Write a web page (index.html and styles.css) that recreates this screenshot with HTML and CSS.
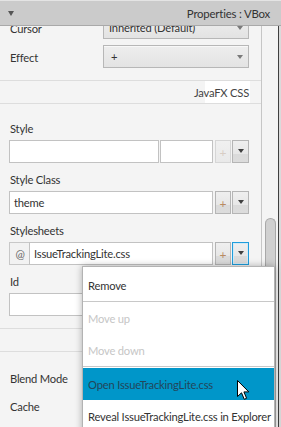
FILE: index.html
```html
<!DOCTYPE html>
<html>
<head>
<meta charset="utf-8">
<link rel="stylesheet" href="styles.css">
</head>
<body>
<div class="panel">
  <div class="header">
    <span class="hdr-tri"></span>
    <span class="hdr-title">Properties : VBox</span>
  </div>
  <div class="body">
    <div class="viewport">
      <div class="content">
        <div class="row">
          <span class="lbl">Cursor</span>
          <div class="combo"><span>Inherited (Default)</span><span class="combo-arrow"></span></div>
        </div>
        <div class="row">
          <span class="lbl">Effect</span>
          <div class="combo"><span class="combo-plus">+</span><span class="combo-arrow"></span></div>
        </div>
        <div class="sep sep-first"></div>
        <div class="band band-css"><span class="band-title">JavaFX CSS</span></div>
        <div class="sep"></div>

        <div class="grp grp-first">
          <div class="glbl">Style</div>
          <div class="fields">
            <div class="field f-style1"></div>
            <div class="field f-style2"></div>
            <div class="btn btn-plus disabled">+</div>
            <div class="btn btn-drop"><span class="drop-tri"></span></div>
          </div>
        </div>
        <div class="grp">
          <div class="glbl">Style Class</div>
          <div class="fields">
            <div class="field f-wide">theme</div>
            <div class="btn btn-plus">+</div>
            <div class="btn btn-drop"><span class="drop-tri"></span></div>
          </div>
        </div>
        <div class="grp">
          <div class="glbl">Stylesheets</div>
          <div class="fields">
            <div class="at">@</div>
            <div class="field f-sheet">IssueTrackingLite.css</div>
            <div class="btn btn-plus">+</div>
            <div class="btn btn-drop focused"><span class="drop-tri"></span></div>
          </div>
        </div>
        <div class="grp">
          <div class="glbl">Id</div>
          <div class="fields">
            <div class="field f-id"></div>
          </div>
        </div>
        <div class="sep sep-id"></div>
        <div class="band"></div>
        <div class="sep"></div>
        <div class="row row-blend">
          <span class="lbl">Blend Mode</span>
        </div>
        <div class="row row-cache">
          <span class="lbl">Cache</span>
        </div>
      </div>
    </div>
    <div class="scroll"><div class="thumb"></div></div>
    <div class="edge-dark"></div>
    <div class="edge-light"></div>
  </div>

  <div class="menu">
    <div class="mi">Remove</div>
    <div class="msep"></div>
    <div class="mi dis">Move up</div>
    <div class="mi dis">Move down</div>
    <div class="msep msep-gap"></div>
    <div class="mi hl">Open IssueTrackingLite.css</div>
    <div class="mi">Reveal IssueTrackingLite.css in Explorer</div>
  </div>

  <svg class="pointer" width="14" height="22" viewBox="0 0 14 22">
    <path d="M0.5 0.5 L0.5 16.5 L4.5 12.8 L7.3 19.3 L9.6 18.3 L6.9 11.9 L11.8 11.9 Z" fill="#ffffff" stroke="#000000" stroke-width="1" stroke-linejoin="miter"/>
  </svg>
</div>
</body>
</html>
```

FILE: styles.css
```css
* { box-sizing: border-box; }
html, body { margin: 0; padding: 0; }
body {
  width: 281px;
  height: 427px;
  overflow: hidden;
  background: #f4f4f4;
  font-family: Lato, "Open Sans", sans-serif;
  font-size: 11.2px;
  letter-spacing: -0.2px;
  color: #333333;
}
.panel {
  position: relative;
  width: 281px;
  height: 427px;
  overflow: hidden;
}
.header {
  height: 26px;
  background: #cbcbcb;
  border-top: 1px solid #e4e4e4;
  border-bottom: 1px solid #a9a9a9;
  display: flex;
  align-items: center;
  justify-content: space-between;
  padding: 0 11px 0 8px;
}
.hdr-tri {
  width: 0;
  height: 0;
  border-left: 3px solid transparent;
  border-right: 3px solid transparent;
  border-top: 5px solid #555555;
  margin-top: 1px;
}
.hdr-title { color: #333333; font-size: 11.4px; }

.body {
  display: flex;
  height: 401px;
}
.viewport {
  width: 262px;
  border-right: 1px solid #c6c6c6;
  overflow: hidden;
}
.content { margin-top: -10px; }

.row {
  display: flex;
  align-items: center;
  height: 23px;
  padding-left: 10px;
}
.row + .row { margin-top: 6px; }
.lbl { width: 93px; padding-top: 1px; }
.combo {
  width: 146px;
  height: 23px;
  border: 1px solid #b7b7b7;
  background: linear-gradient(#eeeeee, #e3e3e3);
  box-shadow: inset 0 1px 0 #f8f8f8;
  display: flex;
  align-items: center;
  justify-content: space-between;
  padding: 0 5px 0 5px;
}
.combo-plus { padding-left: 2px; }
.combo-arrow {
  width: 0;
  height: 0;
  border-left: 3.5px solid transparent;
  border-right: 3.5px solid transparent;
  border-top: 4px solid #7a7a7a;
}

.sep { height: 1px; background: #dddddd; }
.sep-first { margin-top: 12px; }
.band { height: 22px; }
.band-css {
  display: flex;
  align-items: center;
  justify-content: flex-end;
  padding-right: 12px;
  background: linear-gradient(90deg, #f4f4f4 0, #f4f4f4 205px, #ffffff 205px, #ffffff 250px, #f4f4f4 250px);
}
.band-title { color: #444444; }

.grp { padding-left: 9px; margin-top: 8px; }
.grp-first { margin-top: 16px; }
.glbl { height: 17px; line-height: 17px; padding-left: 1px; margin-bottom: 3px; }
.fields { display: flex; height: 23px; }
.field {
  height: 23px;
  border: 1px solid #c2c2c2;
  background: #ffffff;
  display: flex;
  align-items: center;
  padding: 0 4px;
}
.f-style1 { width: 150px; margin-right: 1px; }
.f-style2 { width: 53px; margin-right: 2px; }
.f-wide { width: 204px; margin-right: 2px; }
.f-sheet { width: 184px; margin-right: 2px; padding-left: 4px; }
.f-id { width: 240px; }
.at {
  width: 20px;
  height: 23px;
  border: 1px solid #c8c8c8;
  border-right: none;
  background: #f2f2f2;
  color: #666666;
  display: flex;
  align-items: center;
  justify-content: center;
  padding-left: 1px;
}
.btn {
  height: 23px;
  border: 1px solid #b5b5b5;
  background: linear-gradient(#efefef 0, #e7e7e7 60%, #dadada 62%, #dcdcdc 100%);
  display: flex;
  align-items: center;
  justify-content: center;
}
.btn-plus {
  width: 16px;
  margin-right: 1px;
  color: #b98a62;
  font-size: 12px;
  padding-top: 1px;
}
.btn-plus.disabled {
  border-color: #d6d6d6;
  background: linear-gradient(#f0f0f0, #e9e9e9);
  color: #d8cdc4;
}
.btn-drop { width: 17px; }
.drop-tri {
  width: 0;
  height: 0;
  border-left: 3.5px solid transparent;
  border-right: 3.5px solid transparent;
  border-top: 4px solid #404040;
  margin-top: -1px;
}
.btn-drop.focused {
  border-color: #1f9ddc;
  box-shadow: inset 0 0 0 1px #d2eaf6;
}

.sep-id { margin-top: 12px; }
.row-blend { margin-top: 14px; }
.row.row-cache { margin-top: 5px; }

.scroll { width: 16px; position: relative; }
.thumb {
  margin-top: 192px;
  margin-left: 3px;
  width: 11px;
  height: 240px;
  background: #d0d0d0;
  border: 1px solid #a8a8a8;
  border-bottom: none;
  border-radius: 6px 6px 0 0;
}
.edge-dark { width: 1px; background: #3f3f3f; }
.edge-light { width: 2px; background: #dadada; }

.menu {
  position: absolute;
  left: 82px;
  top: 266px;
  width: 193px;
  height: 170px;
  background: #ffffff;
  border: 1px solid #b3b3b3;
  padding-top: 2px;
  box-shadow: 0 0 7px rgba(0, 0, 0, 0.3);
}
.mi {
  height: 32px;
  display: flex;
  align-items: center;
  padding-left: 5px;
  color: #333333;
  white-space: nowrap;
}
.mi.dis { color: #c6c6c6; }
.mi.hl { background: #0096c9; color: #22465a; }
.msep { height: 1px; background: #c8c8c8; }
.msep-gap { margin-bottom: 1px; }

.pointer {
  position: absolute;
  left: 237px;
  top: 380px;
}
```
